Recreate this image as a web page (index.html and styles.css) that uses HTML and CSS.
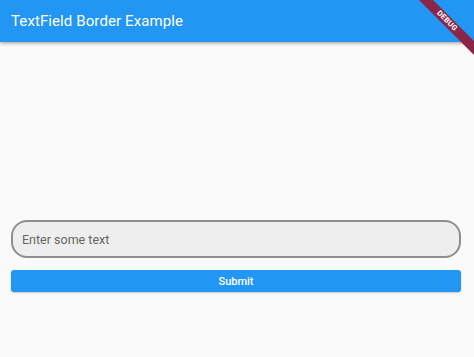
FILE: index.html
```html
<!DOCTYPE html>
<html>
<head>
<meta charset="utf-8">
<link rel="stylesheet" href="styles.css">
</head>
<body>
<div class="app">
  <header class="appbar">
    <h1 class="title">TextField Border Example</h1>
  </header>
  <main class="content">
    <div class="field"><span class="placeholder">Enter some text</span></div>
    <button class="submit">Submit</button>
  </main>
  <div class="banner-clip"><div class="banner">DEBUG</div></div>
</div>
</body>
</html>
```
FILE: styles.css
```css
html, body {
  margin: 0;
  padding: 0;
  background: #fafafa;
  font-family: Roboto, "Noto Sans", sans-serif;
}
.app {
  position: relative;
  width: 474px;
  height: 357px;
  overflow: hidden;
  background: #fafafa;
}
.appbar {
  height: 42px;
  background: #2196f3;
  display: flex;
  align-items: center;
  padding: 0 11px;
  box-shadow: 0 1px 3px rgba(0,0,0,0.25), 0 2px 4px rgba(0,0,0,0.12);
  position: relative;
  z-index: 1;
}
.title {
  margin: 0;
  color: #fff;
  font-size: 15px;
  font-weight: 400;
  letter-spacing: 0.1px;
}
.content {
  display: flex;
  flex-direction: column;
  padding: 178px 13px 0 11px;
  gap: 12px;
}
.field {
  height: 34px;
  border: 2px solid #8f8f8f;
  border-radius: 16px;
  background: #eeeeee;
  display: flex;
  align-items: center;
  padding: 0 9px;
}
.placeholder {
  color: #666;
  font-size: 12.5px;
}
.submit {
  height: 22px;
  border: none;
  border-radius: 3px;
  background: #2196f3;
  color: #fff;
  font-family: Roboto, sans-serif;
  font-size: 11px;
  font-weight: 500;
  padding: 0;
  box-shadow: 0 1px 2px rgba(0,0,0,0.2);
}
.banner-clip {
  position: absolute;
  top: 0;
  right: 0;
  width: 60px;
  height: 60px;
  overflow: hidden;
  z-index: 2;
}
.banner {
  position: absolute;
  left: -17px;
  top: 16px;
  width: 100px;
  height: 10px;
  transform: rotate(45deg);
  background: #8a2749;
  color: #fff;
  font-size: 7.5px;
  font-weight: 700;
  line-height: 10px;
  text-align: center;
  letter-spacing: 0.3px;
}
```
